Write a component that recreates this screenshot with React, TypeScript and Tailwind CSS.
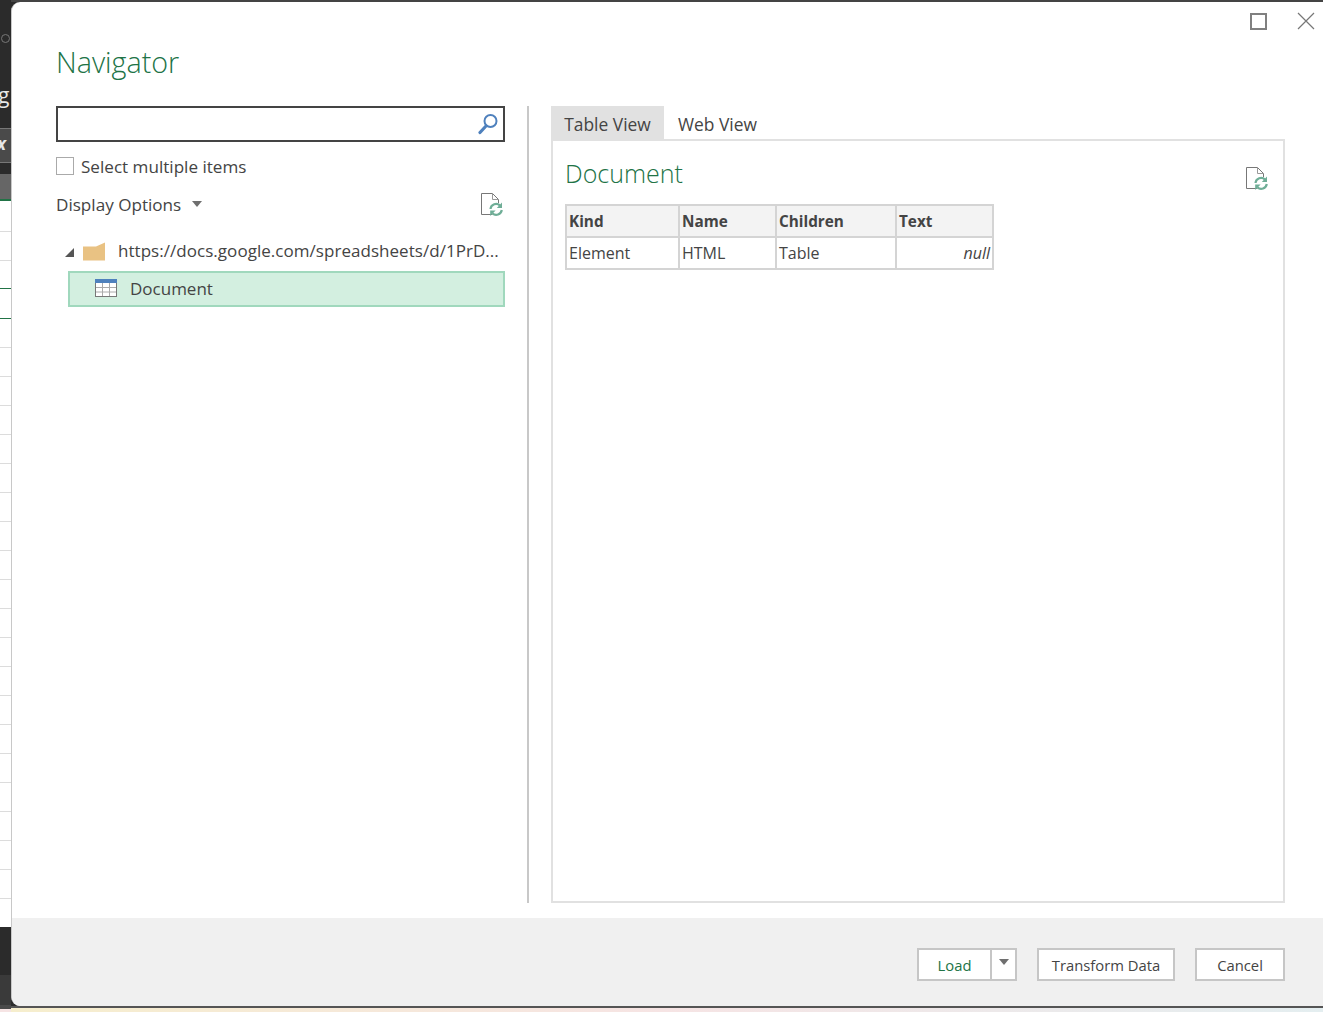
import React from "react";

function FileRefresh() {
  return (
    <svg width="24" height="24" viewBox="0 0 24 24" fill="none">
      <path d="M12.5 22.5H1.5V1.5H12.5L18.5 7.5V11" stroke="#777" strokeWidth="1" />
      <path d="M12.5 1.5V7.5H18.5" stroke="#999" strokeWidth="1" />
      <path d="M10.5 17A5.6 5.6 0 0 1 20 13.6" stroke="#6fae97" strokeWidth="2.2" />
      <path d="M22 10.5V16H16.8Z" fill="#6fae97" />
      <path d="M21.8 18A5.6 5.6 0 0 1 12.4 21.2" stroke="#6fae97" strokeWidth="2.2" />
      <path d="M10.2 24V18.6H15.6Z" fill="#6fae97" />
    </svg>
  );
}

function Caret({ className }: { className: string }) {
  return (
    <svg className={className} width="10" height="6" viewBox="0 0 10 6">
      <path d="M0 0H10L5 6Z" fill="#6f6f6f" />
    </svg>
  );
}

function SideStrip() {
  const rows = ["h-[31px]", "h-[29px]", "h-[28px]", "h-[30px]"];
  return (
    <div className="w-[11px] h-[1012px] shrink-0 flex flex-col bg-[#2b2b2b] overflow-hidden text-[#e8e8e8]">
      <div className="h-[128px] pt-[34px] relative">
        <div className="w-[9px] h-[9px] ml-[1px] rounded-full border border-[#777]" />
        <span className="absolute left-0 top-[82px] text-[21px] leading-[26px] -ml-[2px]">g</span>
      </div>
      <div className="h-[35px] border-y border-[#777] bg-[#4a4a4a] text-[17px] leading-[30px] font-bold italic -ml-[3px]">x</div>
      <div className="h-[11px]" />
      <div className="h-[27px] bg-[#666] border-b-2 border-[#217346]" />
      <div className="h-[726px] bg-white flex flex-col">
        {rows.map((r, i) => (
          <div key={i} className={`${r} border-b ${i >= 2 ? "border-[#217346]" : "border-[#dcdcdc]"}`} />
        ))}
        <div className="flex-1 bg-[repeating-linear-gradient(to_bottom,#ffffff_0px,#ffffff_28px,#dcdcdc_28px,#dcdcdc_29px)]" />
      </div>
      <div className="h-[48px] bg-[#2b2b2b]" />
      <div className="h-[30px] bg-[#3a3a3a]" />
      <div className="h-[4px] bg-[#4a4a4a]" />
      <div className="flex-1 bg-[#f6e4e4]" />
    </div>
  );
}

const cell = "border-2 border-[#d4d4d4] px-[2px] text-left";

export default function App() {
  return (
    <div
      className="w-[1323px] h-[1012px] overflow-hidden flex bg-[#2b2b2b] text-[#444] font-['Open_Sans','Noto_Sans',sans-serif]"
    >
      <SideStrip />
      <div className="flex-1 flex flex-col">
        <div className="h-[2px] bg-[#444]" />
        <div className="h-[1004px] flex flex-col bg-white rounded-tl-[9px] rounded-bl-[9px] overflow-hidden border-l border-[#c8c8c8]">
          <div className="h-[916px] flex flex-col relative">
            <div className="absolute right-[8px] top-[10px] flex items-center gap-[30px]">
              <div className="w-[17px] h-[17px] border-2 border-[#808080]" />
              <svg width="18" height="18" viewBox="0 0 18 18">
                <path d="M1 1L17 17M17 1L1 17" stroke="#777" strokeWidth="1.2" />
              </svg>
            </div>
            <div className="pl-[44px] h-[104px] pt-[41px]">
              <h1 className="font-light text-[28.7px] leading-[38px] text-[#217346]">Navigator</h1>
            </div>
            <div className="flex flex-1 pb-[15px]">
              <div className="w-[517px] shrink-0 border-r-2 border-[#c8c8c8] flex flex-col pl-[44px] pr-[22px]">
                <div className="h-[36px] border-2 border-[#444] flex items-center justify-end pr-[5px]">
                  <svg width="20" height="22" viewBox="0 0 20 22" fill="none">
                    <circle cx="12.5" cy="8" r="6" stroke="#4f81bd" strokeWidth="2" />
                    <path d="M8 13L2 19.5" stroke="#4f81bd" strokeWidth="3.2" strokeLinecap="round" />
                  </svg>
                </div>
                <label className="mt-[15px] h-[18px] flex items-center gap-[7px] text-[17.1px] leading-[24px]">
                  <span className="w-[18px] h-[18px] border border-[#aaa]" />
                  <span className="relative top-[1px]">Select multiple items</span>
                </label>
                <div className="mt-[13px] h-[34px] flex items-center justify-between text-[17.1px]">
                  <span className="flex items-center gap-[11px]">
                    Display Options
                    <Caret className="-mt-[2px]" />
                  </span>
                  <span className="-mt-[3px] mr-[1px]"><FileRefresh /></span>
                </div>
                <div className="mt-[14px] h-[30px] flex items-center pl-[8px] text-[17px] whitespace-nowrap">
                  <svg width="11" height="11" viewBox="0 0 11 11" className="mt-[2px]">
                    <path d="M10 1V10H1Z" fill="#555" />
                  </svg>
                  <svg className="ml-[8px]" width="23" height="19" viewBox="0 0 23 19">
                    <path d="M0 4.5H13L22 0.5V18.5H0Z" fill="#e9c283" />
                  </svg>
                  <span className="ml-[12px] tracking-[0.04px]">https://docs.google.com/spreadsheets/d/1PrD...</span>
                </div>
                <div className="ml-[12px] mt-[5px] h-[36px] bg-[#d3efe0] border-2 border-[#a0d8bd] flex items-center pl-[25px] text-[17px]">
                  <svg width="22" height="18" viewBox="0 0 22 18" className="-mt-[3px]">
                    <rect x="0.5" y="0.5" width="21" height="17" fill="#fff" stroke="#777" />
                    <rect width="22" height="4" fill="#4f81bd" />
                    <path d="M7.5 4V17M14.5 4V17M1 8.5H21M1 13H21" stroke="#aaa" />
                  </svg>
                  <span className="ml-[13px]">Document</span>
                </div>
              </div>
              <div className="flex-1 flex flex-col pl-[22px] pr-[38px]">
                <div className="flex h-[34px] text-[17.4px]">
                  <div className="w-[113px] bg-[#e1e1e1] flex items-center justify-center pt-[2px]">Table View</div>
                  <div className="w-[107px] flex items-center justify-center pt-[2px]">Web View</div>
                </div>
                <div className="flex-1 -mt-[1px] border-2 border-[#e1e1e1] px-[12px] relative">
                  <h2 className="mt-[15px] text-[25px] leading-[34px] font-light text-[#217346]">Document</h2>
                  <span className="absolute right-[14px] top-[25px]"><FileRefresh /></span>
                  <table className="mt-[14px] w-[427px] table-fixed border-collapse text-[16px]">
                    <colgroup>
                      <col className="w-[113px]" />
                      <col className="w-[97px]" />
                      <col className="w-[120px]" />
                      <col className="w-[97px]" />
                    </colgroup>
                    <thead>
                      <tr className="h-[32px] bg-[#f3f3f3] text-[15.3px] font-bold">
                        <th className={cell}>Kind</th>
                        <th className={cell}>Name</th>
                        <th className={cell}>Children</th>
                        <th className={cell}>Text</th>
                      </tr>
                    </thead>
                    <tbody>
                      <tr className="h-[32px]">
                        <td className={cell}>Element</td>
                        <td className={cell}>HTML</td>
                        <td className={cell}>Table</td>
                        <td className={`${cell} text-right italic`}>null</td>
                      </tr>
                    </tbody>
                  </table>
                </div>
              </div>
            </div>
          </div>
          <div className="flex-1 bg-[#f0f0f0] flex justify-end items-start pt-[30px] pr-[38px] text-[14.8px]">
            <div className="h-[33px] flex border-2 border-[#c6c6c6] bg-white">
              <button className="w-[73px] pt-[2px] border-r-2 border-[#c6c6c6] text-[#217346]">Load</button>
              <button className="w-[23px] flex items-center justify-center pb-[6px]"><Caret className="" /></button>
            </div>
            <button className="ml-[20px] w-[138px] h-[33px] pt-[2px] border-2 border-[#c6c6c6] bg-white">Transform Data</button>
            <button className="ml-[20px] w-[90px] h-[33px] pt-[2px] border-2 border-[#c6c6c6] bg-white">Cancel</button>
          </div>
        </div>
        <div className="h-[2px] bg-[#555]" />
        <div className="flex-1 bg-[linear-gradient(to_right,#f6eecd,#f6e4e4_50%,#e4eef0)]" />
      </div>
    </div>
  );
}
